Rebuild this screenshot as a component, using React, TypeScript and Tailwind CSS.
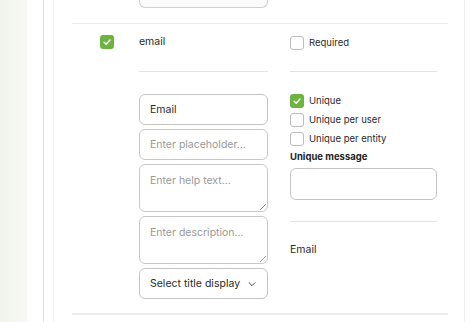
import * as React from "react"

type Check = { label: string; checked: boolean }

const uniqueChecks: Check[] = [
  { label: "Unique", checked: true },
  { label: "Unique per user", checked: false },
  { label: "Unique per entity", checked: false },
]

function Box({ checked }: { checked: boolean }) {
  if (checked) {
    return (
      <span className="flex h-[14px] w-[14px] shrink-0 items-center justify-center rounded-[3px] bg-[#6cb33f]">
        <svg viewBox="0 0 12 12" className="h-[10px] w-[10px]">
          <path d="M2.5 6.3 L5 8.6 L9.6 3.6" fill="none" stroke="#fff" strokeWidth="1.8" strokeLinecap="round" strokeLinejoin="round" />
        </svg>
      </span>
    )
  }
  return <span className="h-[14px] w-[14px] shrink-0 rounded-[3px] border border-[#bdbdbd] bg-white" />
}

export default function App() {
  return (
    <div className="flex h-[322px] w-[474px] overflow-hidden bg-white font-['Inter',sans-serif] text-[#2a2a2a]">
      {/* side rail */}
      <div className="w-[27px] shrink-0 bg-gradient-to-r from-[#f1f4ec] to-[#f7f8f4]" />
      <div className="w-[16px] shrink-0" />
      <div className="w-[10px] shrink-0 border-l border-[#e2e2e2]" />
      <div className="w-[19px] shrink-0 border-l border-[#f1f1f1]" />

      {/* field card */}
      <div className="flex w-[376px] shrink-0 flex-col">
        <div className="h-[23px] pl-[67px]">
          <div className="h-[8px] w-[129px] rounded-b-[6px] border border-t-0 border-[#cfcfcf] bg-[#fbfbfb]" />
        </div>

        <div className="grid grid-cols-[67px_129px_22px_147px] border-t-[1.5px] border-b-2 border-[#ebebeb] pb-[14px]">
          <div className="pl-[28px] pt-[11px]">
            <Box checked={true} />
          </div>

          <div className="flex flex-col">
            <div className="h-[48px] border-b border-[#e3e3e3] pt-[10px] text-[10.5px] leading-[16px]">email</div>
            <div className="mt-[22px] flex flex-col gap-[4px] whitespace-nowrap text-[10.5px]">
              <div className="flex h-[31px] items-center rounded-[6px] border border-[#c4c4c4] px-[10px]">Email</div>
              <div className="flex h-[31px] items-center rounded-[6px] border border-[#c9c9c9] px-[10px] text-[#999]">Enter placeholder...</div>
              <div className="relative h-[48px] rounded-[6px] border border-[#c9c9c9] px-[10px] pt-[8px] text-[#999]">
                Enter help text...
                <span className="absolute bottom-[1px] right-[1px] h-[6px] w-[6px] bg-[linear-gradient(135deg,transparent_45%,#999_45%,#999_55%,transparent_55%)]" />
              </div>
              <div className="relative h-[48px] rounded-[6px] border border-[#c9c9c9] px-[10px] pt-[8px] text-[#999]">
                Enter description...
                <span className="absolute bottom-[1px] right-[1px] h-[6px] w-[6px] bg-[linear-gradient(135deg,transparent_45%,#999_45%,#999_55%,transparent_55%)]" />
              </div>
              <div className="flex h-[31px] items-center justify-between rounded-[6px] border border-[#c4c4c4] pl-[10px] pr-[10px]">
                <span>Select title display</span>
                <svg viewBox="0 0 12 12" className="h-[10px] w-[10px]">
                  <path d="M2.5 4.5 L6 8 L9.5 4.5" fill="none" stroke="#444" strokeWidth="1.2" strokeLinecap="round" strokeLinejoin="round" />
                </svg>
              </div>
            </div>
          </div>

          <div />

          <div className="flex flex-col">
            <div className="flex h-[48px] items-start gap-[5px] border-b border-[#e3e3e3] pt-[12px] text-[9.5px] leading-[14px]">
              <Box checked={false} />
              <span>Required</span>
            </div>
            <div className="mt-[22px] flex flex-col gap-[5px]">
              {uniqueChecks.map((c) => (
                <div key={c.label} className="flex items-center gap-[5px] text-[9.5px] leading-[14px]">
                  <Box checked={c.checked} />
                  <span>{c.label}</span>
                </div>
              ))}
            </div>
            <div className="mt-[4px] text-[9.5px] font-bold leading-[14px] text-[#1f1f1f]">Unique message</div>
            <div className="mt-[4px] h-[32px] rounded-[6px] border border-[#c4c4c4]" />
            <div className="mt-[21px] border-t border-[#e3e3e3] pt-[20px] text-[10.5px] leading-[16px]">Email</div>
          </div>
        </div>
      </div>

      <div className="w-[16px] shrink-0" />
      <div className="flex-1 border-l border-[#eeeeee]" />
    </div>
  )
}
